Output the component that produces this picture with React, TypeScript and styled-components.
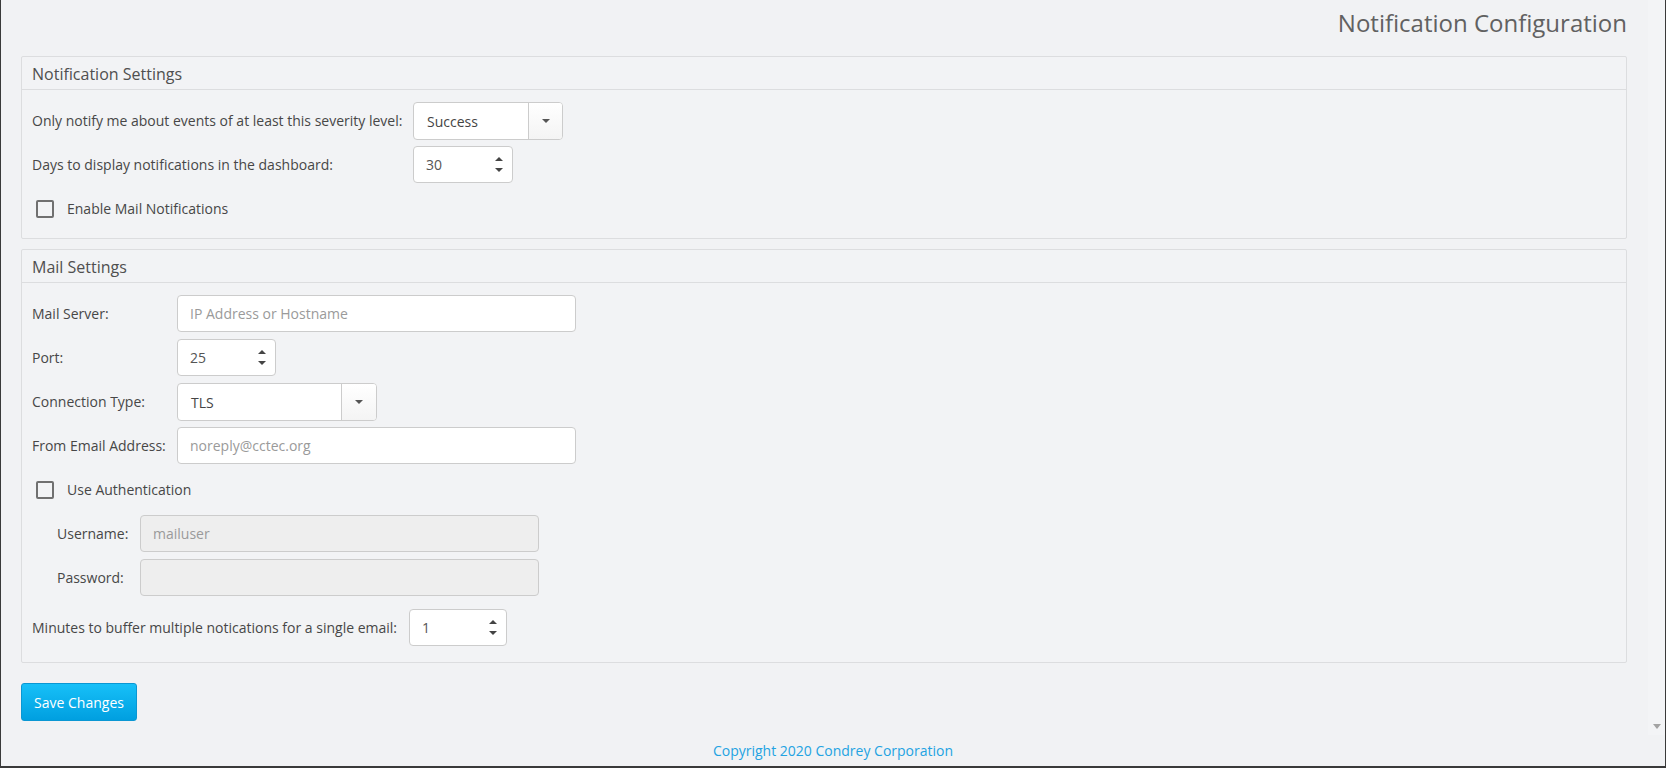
import React from "react";
import styled, { createGlobalStyle } from "styled-components";

const Global = createGlobalStyle`
  html, body { margin: 0; padding: 0; }
  body { font-family: "Open Sans", "Liberation Sans", sans-serif; background: #f1f2f4; }
  * { box-sizing: border-box; }
`;

const Frame = styled.div`
  width: 1666px;
  height: 768px;
  display: flex;
  flex-direction: column;
  border-left: 1px solid #3a3a3a;
  border-right: 1px solid #3a3a3a;
  border-bottom: 2px solid #3a3a3a;
  background: #f1f2f4;
  overflow: hidden;
`;

const ScrollArea = styled.div`
  flex: 1;
  display: flex;
  min-height: 0;
`;

const Content = styled.main`
  flex: 1;
  padding: 0 21px 0 20px;
  min-width: 0;
`;

const ScrollBar = styled.div`
  width: 17px;
  display: flex;
  flex-direction: column;
  justify-content: flex-end;
  align-items: center;
  padding-bottom: 6px;
  background: #f3f4f6;
`;

const ScrollArrow = styled.span`
  width: 0;
  height: 0;
  border-left: 4px solid transparent;
  border-right: 4px solid transparent;
  border-top: 5px solid #a3a3a3;
`;

const PageTitle = styled.h1`
  margin: 6px 0 17px;
  height: 33px;
  line-height: 33px;
  text-align: right;
  font-size: 24px;
  font-weight: 400;
  color: #616161;
`;

const Panel = styled.section<{ $mb?: number }>`
  border: 1px solid #dcdddf;
  border-radius: 2px;
  background: #f2f3f5;
  margin-bottom: ${(p) => p.$mb ?? 10}px;
`;

const PanelHeader = styled.div`
  padding: 6px 10px 4px;
  line-height: 22px;
  font-size: 16px;
  color: #4f4f4f;
  border-bottom: 1px solid #dcdddf;
`;

const PanelBody = styled.div<{ $pb: number }>`
  padding: 12px 10px ${(p) => p.$pb}px;
  display: flex;
  flex-direction: column;
  gap: 7px;
`;

const Row = styled.div<{ $indent?: number; $mt?: number }>`
  display: flex;
  align-items: center;
  height: 37px;
  padding-left: ${(p) => p.$indent ?? 0}px;
  margin-top: ${(p) => p.$mt ?? 0}px;
`;

const Label = styled.label<{ $w: number }>`
  width: ${(p) => p.$w}px;
  flex: none;
  font-size: 14px;
  color: #474747;
`;

const TextInput = styled.input<{ $w: number }>`
  width: ${(p) => p.$w}px;
  height: 37px;
  padding: 0 12px;
  border: 1px solid #cccccc;
  border-radius: 4px;
  background: #ffffff;
  font-family: "Open Sans", "Liberation Sans", sans-serif;
  font-size: 14px;
  color: #555;
  outline: none;
  &::placeholder { color: #9a9a9a; }
  &:disabled { background: #eeeeee; color: #9a9a9a; }
`;

const NumberWrap = styled.div<{ $w: number }>`
  position: relative;
  width: ${(p) => p.$w}px;
  height: 37px;
`;

const NumberField = styled.input`
  width: 100%;
  height: 100%;
  padding: 0 12px;
  border: 1px solid #cccccc;
  border-radius: 4px;
  background: #ffffff;
  font-family: "Open Sans", "Liberation Sans", sans-serif;
  font-size: 14px;
  color: #555;
  outline: none;
`;

const Spinner = styled.div`
  position: absolute;
  right: 10px;
  top: 0;
  bottom: 0;
  display: flex;
  flex-direction: column;
  justify-content: center;
  gap: 7px;
  pointer-events: none;
`;

const Tri = styled.span<{ $up?: boolean }>`
  width: 0;
  height: 0;
  border-left: 4px solid transparent;
  border-right: 4px solid transparent;
  ${(p) => (p.$up ? "border-bottom: 4px solid #444;" : "border-top: 4px solid #444;")}
`;

const SelectBox = styled.div<{ $w: number; $btn: number }>`
  display: grid;
  grid-template-columns: 1fr ${(p) => p.$btn}px;
  width: ${(p) => p.$w}px;
  height: 38px;
  border: 1px solid #cccccc;
  border-radius: 4px;
  background: #ffffff;
  overflow: hidden;
`;

const SelectValue = styled.div`
  display: flex;
  align-items: center;
  padding: 2px 12px 0 13px;
  font-size: 14px;
  color: #444;
  border-right: 1px solid #cccccc;
`;

const SelectButton = styled.div`
  display: flex;
  align-items: center;
  justify-content: center;
  background: linear-gradient(#ffffff, #f4f4f4);
`;

const Caret = styled.span`
  width: 0;
  height: 0;
  border-left: 4px solid transparent;
  border-right: 4px solid transparent;
  border-top: 4px solid #555;
`;

const CheckRow = styled.label`
  display: flex;
  align-items: center;
  height: 37px;
  padding-left: 4px;
  gap: 13px;
  font-size: 14px;
  color: #474747;
`;

const CheckBox = styled.span`
  width: 18px;
  height: 18px;
  border: 2px solid #707070;
  border-radius: 2px;
  background: transparent;
`;

const SaveButton = styled.button`
  width: 116px;
  height: 38px;
  border: 1px solid #0a97d3;
  border-radius: 3px;
  background: linear-gradient(#17c0f8, #009fe0);
  color: #ffffff;
  font-family: "Open Sans", "Liberation Sans", sans-serif;
  font-size: 14px;
  padding: 0;
  cursor: pointer;
`;

const Footer = styled.footer`
  height: 31px;
  display: flex;
  align-items: center;
  justify-content: center;
  font-size: 14px;
  color: #23a3e2;
`;

function NumberInput({ w, value }: { w: number; value: string }) {
  return (
    <NumberWrap $w={w}>
      <NumberField defaultValue={value} />
      <Spinner>
        <Tri $up />
        <Tri />
      </Spinner>
    </NumberWrap>
  );
}

function Select({ w, btn, value }: { w: number; btn: number; value: string }) {
  return (
    <SelectBox $w={w} $btn={btn}>
      <SelectValue>{value}</SelectValue>
      <SelectButton>
        <Caret />
      </SelectButton>
    </SelectBox>
  );
}

export default function App() {
  return (
    <>
      <Global />
      <Frame>
        <ScrollArea>
          <Content>
            <PageTitle>Notification Configuration</PageTitle>
            <Panel>
              <PanelHeader>Notification Settings</PanelHeader>
              <PanelBody $pb={11}>
                <Row>
                  <Label $w={381}>Only notify me about events of at least this severity level:</Label>
                  <Select w={150} btn={33} value="Success" />
                </Row>
                <Row>
                  <Label $w={381}>Days to display notifications in the dashboard:</Label>
                  <NumberInput w={100} value="30" />
                </Row>
                <CheckRow>
                  <CheckBox />
                  Enable Mail Notifications
                </CheckRow>
              </PanelBody>
            </Panel>
            <Panel $mb={20}>
              <PanelHeader>Mail Settings</PanelHeader>
              <PanelBody $pb={16}>
                <Row>
                  <Label $w={145}>Mail Server:</Label>
                  <TextInput $w={399} placeholder="IP Address or Hostname" />
                </Row>
                <Row>
                  <Label $w={145}>Port:</Label>
                  <NumberInput w={99} value="25" />
                </Row>
                <Row>
                  <Label $w={145}>Connection Type:</Label>
                  <Select w={200} btn={34} value="TLS" />
                </Row>
                <Row>
                  <Label $w={145}>From Email Address:</Label>
                  <TextInput $w={399} placeholder="noreply@cctec.org" />
                </Row>
                <CheckRow>
                  <CheckBox />
                  Use Authentication
                </CheckRow>
                <Row $indent={25}>
                  <Label $w={83}>Username:</Label>
                  <TextInput $w={399} placeholder="mailuser" disabled />
                </Row>
                <Row $indent={25}>
                  <Label $w={83}>Password:</Label>
                  <TextInput $w={399} type="password" disabled />
                </Row>
                <Row $mt={6}>
                  <Label $w={377}>Minutes to buffer multiple notications for a single email:</Label>
                  <NumberInput w={98} value="1" />
                </Row>
              </PanelBody>
            </Panel>
            <SaveButton>Save Changes</SaveButton>
          </Content>
          <ScrollBar>
            <ScrollArrow />
          </ScrollBar>
        </ScrollArea>
        <Footer>Copyright 2020 Condrey Corporation</Footer>
      </Frame>
    </>
  );
}
